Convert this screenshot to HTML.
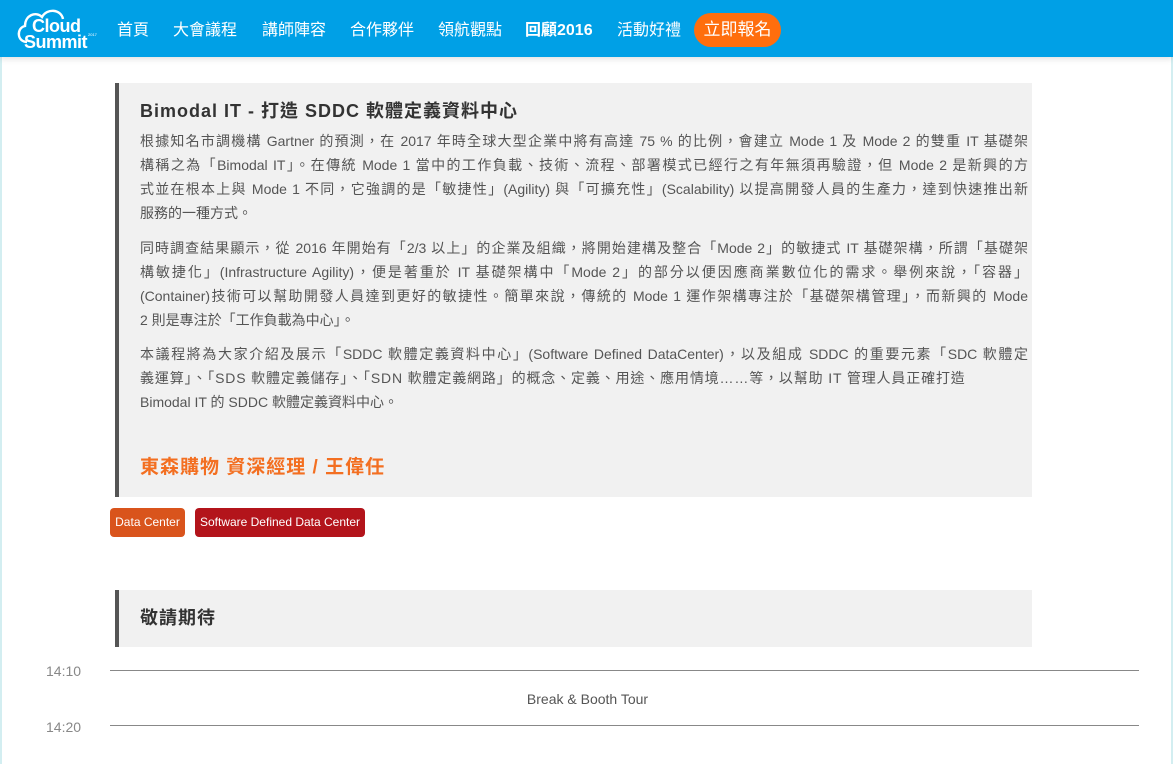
<!DOCTYPE html>
<html><head><meta charset="utf-8"><style>
*{margin:0;padding:0;box-sizing:border-box}
body{width:1173px;height:764px;overflow:hidden;background:#fff;font-family:"Liberation Sans","Noto Sans CJK TC",sans-serif;position:relative}
.edge{position:absolute;top:57px;bottom:0;width:2px;background:#d3eef1}
header{position:absolute;left:0;top:0;width:1173px;height:57px;background:#00a0e6;box-shadow:0 2px 6px rgba(0,0,0,.12)}
.nav{position:absolute;top:20px;color:#fff;font-size:16px;line-height:22px;white-space:nowrap}
.btn{position:absolute;left:694px;top:13px;width:87px;height:34px;border-radius:17px;background:#ff6e0d;color:#fff;font-size:17px;line-height:34px;text-align:center}
.box{position:absolute;left:115px;width:917px;background:#f1f1f1;border-left:4px solid #555}
.t{position:absolute;left:140px;width:888px;color:#555;font-size:14px;line-height:24px}
.t div{white-space:nowrap}
.t .j{text-align:justify;text-align-last:justify;white-space:normal;height:24px;overflow:hidden}
h2{position:absolute;left:140px;font-size:18px;color:#333;font-weight:bold;white-space:nowrap;letter-spacing:1px}
.tag{position:absolute;top:508px;height:29px;border-radius:4px;color:#fff;font-size:12px;line-height:29px;text-align:center}
.time{position:absolute;left:46px;color:#888;font-size:14px}
.line{position:absolute;left:110px;width:1029px;height:1px;background:#888}
</style></head><body>
<div class="edge" style="left:0"></div><div class="edge" style="right:0"></div>
<header>
<svg style="position:absolute;left:15px;top:6px" width="84" height="46" viewBox="0 0 84 46" fill="none" stroke="#fff" stroke-width="2.4">
<path d="M12 36 C2 36 1 22 10 20 C10 9 21 5 27 11 C32 2 46 3 48 13"/>
<text x="17" y="26" fill="#fff" stroke="none" font-family="Liberation Sans" font-size="18" font-weight="bold" letter-spacing="-0.5">Cloud</text>
<text x="9" y="42" fill="#fff" stroke="none" font-family="Liberation Sans" font-size="18" font-weight="bold" letter-spacing="-0.5">Summit</text>
<text x="73" y="30" fill="#fff" stroke="none" font-family="Liberation Sans" font-size="4">2017</text>
</svg>
<div class="nav" style="left:117px">首頁</div>
<div class="nav" style="left:173px">大會議程</div>
<div class="nav" style="left:262px">講師陣容</div>
<div class="nav" style="left:350px">合作夥伴</div>
<div class="nav" style="left:438px">領航觀點</div>
<div class="nav" style="left:525px;font-weight:bold">回顧2016</div>
<div class="nav" style="left:617px">活動好禮</div>
<div class="btn">立即報名</div>
</header>

<div class="box" style="top:83px;height:414px"></div>
<h2 style="top:97px">Bimodal IT - 打造 SDDC 軟體定義資料中心</h2>
<div class="t" style="top:129px">
<div class="j">根據知名市調機構 Gartner 的預測，在 2017 年時全球大型企業中將有高達 75 % 的比例，會建立 Mode 1 及 Mode 2 的雙重 IT 基礎架</div>
<div class="j">構稱之為「Bimodal IT」。在傳統 Mode 1 當中的工作負載、技術、流程、部署模式已經行之有年無須再驗證，但 Mode 2 是新興的方</div>
<div class="j">式並在根本上與 Mode 1 不同，它強調的是「敏捷性」(Agility) 與「可擴充性」(Scalability) 以提高開發人員的生產力，達到快速推出新</div>
<div>服務的一種方式。</div></div>
<div class="t" style="top:236px">
<div class="j">同時調查結果顯示，從 2016 年開始有「2/3 以上」的企業及組織，將開始建構及整合「Mode 2」的敏捷式 IT 基礎架構，所謂「基礎架</div>
<div class="j">構敏捷化」(Infrastructure Agility)，便是著重於 IT 基礎架構中「Mode 2」的部分以便因應商業數位化的需求。舉例來說，「容器」</div>
<div class="j">(Container)技術可以幫助開發人員達到更好的敏捷性。簡單來說，傳統的 Mode 1 運作架構專注於「基礎架構管理」，而新興的 Mode</div>
<div>2 則是專注於「工作負載為中心」。</div></div>
<div class="t" style="top:342px">
<div class="j">本議程將為大家介紹及展示「SDDC 軟體定義資料中心」(Software Defined DataCenter)，以及組成 SDDC 的重要元素「SDC 軟體定</div>
<div style="letter-spacing:0.85px">義運算」、「SDS 軟體定義儲存」、「SDN 軟體定義網路」的概念、定義、用途、應用情境……等，以幫助 IT 管理人員正確打造</div>
<div>Bimodal IT 的 SDDC 軟體定義資料中心。</div></div>
<h2 style="top:452px;color:#f36f21;font-size:19px">東森購物 資深經理 / 王偉任</h2>

<div class="tag" style="left:110px;width:75px;background:#d9541c">Data Center</div>
<div class="tag" style="left:195px;width:170px;background:#b3141b">Software Defined Data Center</div>

<div class="box" style="top:590px;height:57px"></div>
<h2 style="top:604px">敬請期待</h2>

<div class="time" style="top:663px">14:10</div>
<div class="line" style="top:670px"></div>
<div style="position:absolute;left:110px;width:955px;top:691px;text-align:center;color:#555;font-size:14px">Break &amp; Booth Tour</div>
<div class="time" style="top:719px">14:20</div>
<div class="line" style="top:725px"></div>
</body></html>
